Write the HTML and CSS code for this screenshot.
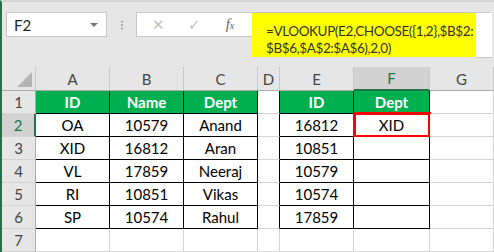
FILE: index.html
```html
<!DOCTYPE html>
<html lang="en">
  <head>
    <meta charset="UTF-8" />
    <title>VLOOKUP with CHOOSE</title>
    <link rel="stylesheet" href="styles.css">
  </head>
  <body>
    <div class="app">
      <div class="formula-row">
        <div class="name-box">
          <span>F2</span>
          <span class="caret"></span>
        </div>
        <div class="grip"></div>
        <div class="formula-box">
          <span class="fb-icon cancel">&#x2715;</span>
          <span class="fb-icon ok">&#x2713;</span>
          <span class="fb-icon fx"><i>f</i><small>x</small></span>
        </div>
        <div class="formula-note">
          <div class="line">=VLOOKUP(E2,CHOOSE({1,2},$B$2:</div>
          <div class="line">$B$6,$A$2:$A$6),2,0)</div>
        </div>
        <div class="formula-tail"></div>
      </div>

      <div class="sheet">
        <div class="ch corner"><span class="tri"></span></div>
        <div class="ch">A</div>
        <div class="ch">B</div>
        <div class="ch">C</div>
        <div class="ch">D</div>
        <div class="ch">E</div>
        <div class="ch active">F</div>
        <div class="ch">G</div>

        <div class="rh">1</div>
        <div class="c hd bl">ID</div>
        <div class="c hd bl">Name</div>
        <div class="c hd bl">Dept</div>
        <div class="c edge"></div>
        <div class="c hd bl">ID</div>
        <div class="c hd bl">Dept</div>
        <div class="c"></div>

        <div class="rh active">2</div>
        <div class="c bl">OA</div>
        <div class="c bl">10579</div>
        <div class="c bl">Anand</div>
        <div class="c edge"></div>
        <div class="c bl">16812</div>
        <div class="c bl sel">XID<span class="sel-box"></span></div>
        <div class="c"></div>

        <div class="rh">3</div>
        <div class="c bl">XID</div>
        <div class="c bl">16812</div>
        <div class="c bl">Aran</div>
        <div class="c edge"></div>
        <div class="c bl">10851</div>
        <div class="c bl"></div>
        <div class="c"></div>

        <div class="rh">4</div>
        <div class="c bl">VL</div>
        <div class="c bl">17859</div>
        <div class="c bl">Neeraj</div>
        <div class="c edge"></div>
        <div class="c bl">10579</div>
        <div class="c bl"></div>
        <div class="c"></div>

        <div class="rh">5</div>
        <div class="c bl">RI</div>
        <div class="c bl">10851</div>
        <div class="c bl">Vikas</div>
        <div class="c edge"></div>
        <div class="c bl">10574</div>
        <div class="c bl"></div>
        <div class="c"></div>

        <div class="rh">6</div>
        <div class="c bl">SP</div>
        <div class="c bl">10574</div>
        <div class="c bl">Rahul</div>
        <div class="c edge"></div>
        <div class="c bl">17859</div>
        <div class="c bl"></div>
        <div class="c"></div>

        <div class="rh">7</div>
        <div class="c"></div>
        <div class="c"></div>
        <div class="c"></div>
        <div class="c"></div>
        <div class="c"></div>
        <div class="c"></div>
        <div class="c"></div>
      </div>
    </div>
  </body>
</html>
```

FILE: styles.css
```css
body {
  margin: 0;
  font-family: Lato, "Open Sans", sans-serif;
  background-color: #e6e6e6;
  overflow: hidden;
}
.app {
  position: relative;
  height: 252px;
  border-top: 2px solid #d4d4d4;
  border-left: 2px solid #217346;
  box-sizing: border-box;
}
.formula-row {
  display: flex;
  align-items: flex-start;
  height: 65px;
  padding: 10px 0 0 4px;
  box-sizing: border-box;
}
.name-box {
  width: 101px;
  height: 25px;
  box-sizing: border-box;
  background-color: #fff;
  border: 1px solid #c6c6c6;
  display: flex;
  align-items: center;
  justify-content: space-between;
  padding: 0 8px 0 7px;
  font-size: 15px;
  color: #222;
}
.caret {
  width: 0;
  height: 0;
  border-left: 4px solid transparent;
  border-right: 4px solid transparent;
  border-top: 4px solid #777;
}
.grip {
  width: 2px;
  height: 10px;
  margin: 8px 13px 0 14px;
  background-image: radial-gradient(circle, #a0a0a0 1px, transparent 1px);
  background-size: 2px 3.4px;
}
.formula-box {
  width: 354px;
  height: 25px;
  box-sizing: border-box;
  background-color: #fff;
  border: 1px solid #c6c6c6;
  display: flex;
  align-items: center;
  padding-left: 13px;
  gap: 20px;
}
.fb-icon {
  color: #c0c0c0;
  font-size: 15px;
  width: 16px;
  text-align: center;
}
.fb-icon.fx {
  color: #666;
  font-family: "Liberation Serif", serif;
  font-size: 15px;
}
.fb-icon.fx small {
  font-style: italic;
  font-size: 10px;
}
.formula-note {
  position: absolute;
  left: 250px;
  top: 11px;
  width: 224px;
  height: 44px;
  box-sizing: border-box;
  background-color: #ffff00;
  padding: 10px 0 0 14px;
  font-size: 13.5px;
  letter-spacing: -0.4px;
  line-height: 17px;
  color: #333;
}
.line {
  white-space: nowrap;
}
.formula-tail {
  position: absolute;
  left: 474px;
  top: 11px;
  width: 16px;
  height: 44px;
  background-color: #fff;
  border-bottom: 1px solid #c6c6c6;
}
.sheet {
  display: grid;
  grid-template-columns: 34px 74px 74px 74px 22px 74px 76px 1fr;
  grid-template-rows: 24px repeat(7, 23px);
  font-size: 15px;
}
.ch,
.rh {
  display: flex;
  align-items: center;
  justify-content: center;
  color: #444;
  box-sizing: border-box;
}
.ch {
  border-right: 1px solid #c8c8c8;
  border-bottom: 1px solid #ababab;
}
.rh {
  border-right: 1px solid #ababab;
  border-bottom: 1px solid #d4d4d4;
}
.ch.active {
  background-color: #d2d2d2;
  color: #217346;
  border-bottom: 2px solid #217346;
}
.rh.active {
  background-color: #d2d2d2;
  color: #217346;
  border-right: 2px solid #217346;
}
.corner {
  justify-content: flex-end;
  align-items: flex-end;
  padding: 0 3px 3px 0;
}
.tri {
  width: 0;
  height: 0;
  border-left: 15px solid transparent;
  border-bottom: 15px solid #b4b4b4;
}
.c {
  position: relative;
  background-color: #fff;
  border-right: 1px solid #d4d4d4;
  border-bottom: 1px solid #d4d4d4;
  box-sizing: border-box;
  display: flex;
  align-items: center;
  justify-content: center;
  color: #000;
}
.c.bl {
  border-right-color: #000;
  border-bottom-color: #000;
}
.c.edge {
  border-right-color: #000;
}
.c.hd {
  background-color: #00b050;
  color: #fff;
  font-weight: bold;
}
.sel-box {
  position: absolute;
  left: -1px;
  top: -2px;
  right: -2px;
  bottom: -2px;
  border: 3px solid #ff0000;
}
```
